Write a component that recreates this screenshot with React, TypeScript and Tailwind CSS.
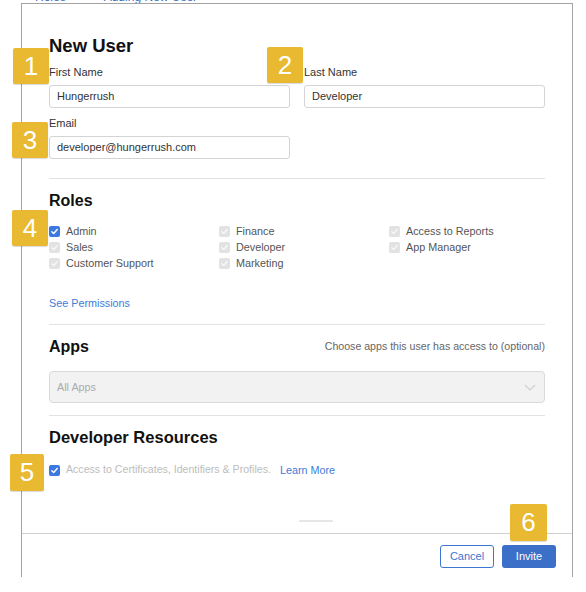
import React from "react";

const font = { fontFamily: '"Liberation Sans", Arial, sans-serif' };

const Check = ({ on }: { on?: boolean }) => (
  <span
    className={
      "flex items-center justify-center w-[11px] h-[11px] rounded-[2px] shrink-0 " +
      (on ? "bg-[#3b78e0]" : "bg-[#e2e2e2]")
    }
  >
    <svg width="9" height="9" viewBox="0 0 10 10" fill="none">
      <path
        d="M2 5.2 L4.1 7.2 L8 2.8"
        stroke={on ? "#ffffff" : "#f7f7f7"}
        strokeWidth="1.6"
        strokeLinecap="round"
        strokeLinejoin="round"
      />
    </svg>
  </span>
);

const Role = ({ label, on }: { label: string; on?: boolean }) => (
  <div className="flex items-center gap-[6px] h-[16px]">
    <Check on={on} />
    <span className="text-[10.8px] text-[#555] leading-[14px]">{label}</span>
  </div>
);

const Badge = ({ n, className }: { n: number; className: string }) => (
  <div
    className={
      "absolute flex items-center justify-center bg-[#e8b931] text-white text-[26px] rounded-[2px] shadow-[0_1px_1px_rgba(0,0,0,0.15)] " +
      className
    }
  >
    {n}
  </div>
);

const Field = ({ label, value }: { label: string; value: string }) => (
  <div className="flex flex-col">
    <label className="text-[11px] leading-[14px] text-[#333]">{label}</label>
    <div className="mt-[6px] h-[23px] border border-[#d4d4d4] rounded-[3px] flex items-center pl-[7px] text-[11px] text-[#333]">
      {value}
    </div>
  </div>
);

const Divider = ({ className }: { className: string }) => (
  <div className={"h-px bg-[#e2e2e2] " + className} />
);

export default function App() {
  return (
    <div className="relative w-[586px] h-[592px] bg-white overflow-hidden" style={font}>
      {/* page behind the modal, mostly hidden */}
      <div className="h-[3px] overflow-hidden">
        <div className="flex gap-[38px] pl-[35px] -mt-[10px] text-[12px] leading-[14px] text-[#3d6fb8]">
          <span>Roles</span>
          <span>Adding New User</span>
        </div>
      </div>

      <div className="ml-[21px] w-[552px] h-[574px] border-t border-l border-r border-[#a3a3a3] flex flex-col">
        <div className="flex-1 flex flex-col pl-[27px] pr-[27px] pt-[30px]">
          <h2 className="text-[18.5px] font-bold leading-[24px] text-[#111]">New User</h2>

          <div className="mt-[7px] grid grid-cols-[241px_241px] gap-x-[14px]">
            <Field label="First Name" value="Hungerrush" />
            <Field label="Last Name" value="Developer" />
          </div>
          <div className="mt-[8px] w-[241px]">
            <Field label="Email" value="developer@hungerrush.com" />
          </div>

          <Divider className="mt-[19px]" />

          <h3 className="mt-[12px] text-[16px] font-bold leading-[20px] text-[#111]">Roles</h3>
          <div className="mt-[12px] grid grid-cols-[170px_170px_1fr]">
            <div>
              <Role label="Admin" on />
              <Role label="Sales" />
              <Role label="Customer Support" />
            </div>
            <div>
              <Role label="Finance" />
              <Role label="Developer" />
              <Role label="Marketing" />
            </div>
            <div>
              <Role label="Access to Reports" />
              <Role label="App Manager" />
            </div>
          </div>

          <a className="mt-[25px] text-[10.8px] leading-[14px] text-[#3d7dd8]">See Permissions</a>

          <Divider className="mt-[14px]" />

          <div className="mt-[12px] flex items-center justify-between h-[20px]">
            <h3 className="text-[16px] font-bold leading-[20px] text-[#111]">Apps</h3>
            <span className="text-[10.6px] text-[#666]">Choose apps this user has access to (optional)</span>
          </div>

          <div className="mt-[14px] h-[32px] bg-[#f2f2f2] border border-[#dadada] rounded-[4px] flex items-center justify-between pl-[7px] pr-[8px]">
            <span className="text-[10.8px] text-[#ababab]">All Apps</span>
            <svg width="12" height="7" viewBox="0 0 12 7" fill="none">
              <path d="M1 1 L6 6 L11 1" stroke="#cfcfcf" strokeWidth="1.2" />
            </svg>
          </div>

          <Divider className="mt-[12px]" />

          <h3 className="mt-[11px] text-[16.5px] font-bold leading-[20px] text-[#111]">Developer Resources</h3>
          <div className="mt-[16px] flex items-center h-[14px]">
            <Check on />
            <span className="ml-[6px] text-[10.6px] text-[#bdbdbd]">
              Access to Certificates, Identifiers &amp; Profiles.
            </span>
            <a className="ml-[9px] text-[10.8px] text-[#3d7dd8]">Learn More</a>
          </div>

          <div className="mt-[43px] ml-[250px] w-[34px] h-[2px] bg-[#e6e6e6] rounded-full" />
        </div>

        <div className="border-t border-[#d0d0d0] h-[44px] pt-[11px] pr-[16px] flex justify-end gap-[8px]">
          <button className="w-[54px] h-[23px] border border-[#3b76d2] rounded-[3px] text-[11px] text-[#3b76d2] bg-white">
            Cancel
          </button>
          <button className="w-[54px] h-[23px] rounded-[3px] text-[11px] text-white bg-[#3c6fc8]">
            Invite
          </button>
        </div>
      </div>

      <Badge n={1} className="left-[13px] top-[48px] w-[36px] h-[36px]" />
      <Badge n={2} className="left-[267px] top-[47px] w-[36px] h-[36px]" />
      <Badge n={3} className="left-[12px] top-[122px] w-[36px] h-[36px]" />
      <Badge n={4} className="left-[12px] top-[210px] w-[36px] h-[36px]" />
      <Badge n={5} className="left-[10px] top-[454px] w-[34px] h-[37px]" />
      <Badge n={6} className="left-[510px] top-[504px] w-[37px] h-[37px]" />
    </div>
  );
}
